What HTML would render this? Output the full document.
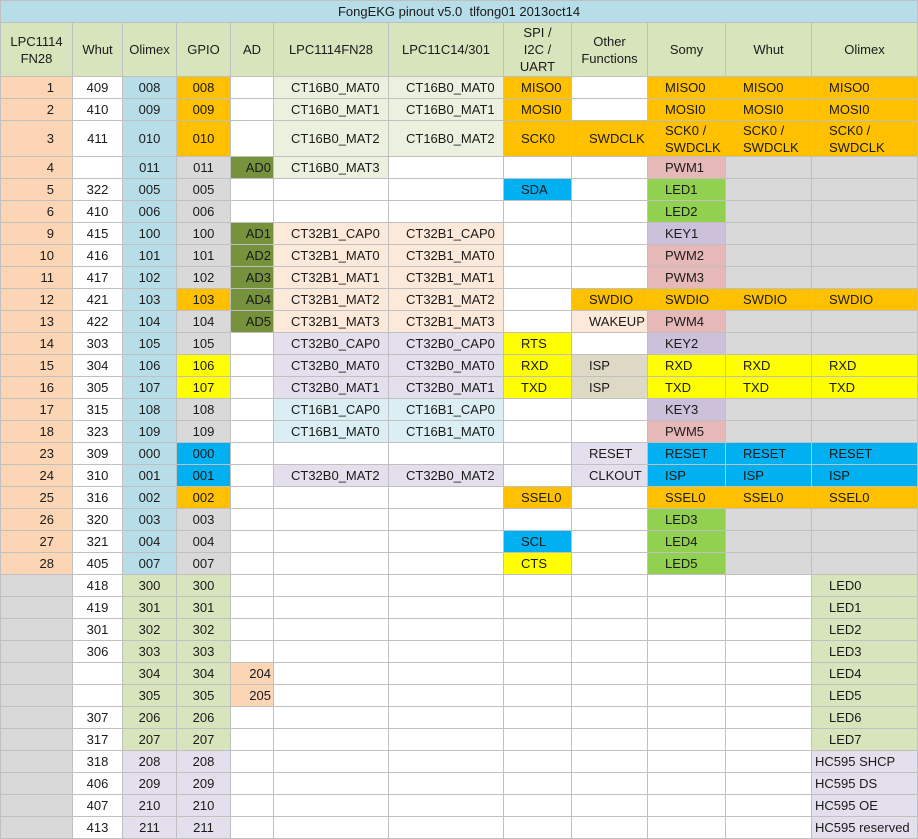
<!DOCTYPE html>
<html><head><meta charset="utf-8"><style>
*{margin:0;padding:0;box-sizing:border-box}
body{width:918px;height:839px;overflow:hidden;background:#fff;font-family:"Liberation Sans",Arial,sans-serif;font-size:13px;color:#1a1a1a}
.g{display:grid;background:#c0c0c0;padding:1px 0 1px 1px;gap:1px;width:918px;
grid-template-columns:71px 49px 53px 53px 42px 114px 114px 67px 75px 77px 85px 105px;
grid-template-rows:21px 53px 21px 21px 35px repeat(31,21px)}
.g>div{display:flex;align-items:center;background:#fff;white-space:nowrap;line-height:17px;overflow:hidden}
.t{grid-column:1/13;justify-content:center;background:#b7dee8!important}
.hd{background:#d8e4bc!important;justify-content:center;text-align:center}
.r{justify-content:flex-end;padding-right:18px}
.ra{justify-content:flex-end;padding-right:2px}
.c{justify-content:center}
.l{padding-left:17px}
.l3{padding-left:3px}
.p{background:#fcd5b4!important}.b{background:#b7dee8!important}.o{background:#ffc000!important}
.gy{background:#d9d9d9!important}.ol{background:#76923c!important}.lg{background:#ebf1de!important}
.pk{background:#e6b9b8!important}.gr{background:#92d050!important}.lv{background:#ccc0da!important}
.ll{background:#e4dfec!important}.pl{background:#fde9d9!important}.cy{background:#daeef3!important}
.tn{background:#ddd9c4!important}.bl{background:#00b0f0!important}.y{background:#ffff00!important}
.h{background:#d8e4bc!important}
</style></head><body><div class="g">
<div class="t">FongEKG pinout v5.0&nbsp; tlfong01 2013oct14</div>
<div class="hd">LPC1114<br>FN28</div><div class="hd">Whut</div><div class="hd">Olimex</div><div class="hd">GPIO</div><div class="hd">AD</div><div class="hd">LPC1114FN28</div><div class="hd">LPC11C14/301</div><div class="hd">SPI /<br>I2C /<br>UART</div><div class="hd">Other<br>Functions</div><div class="hd">Somy</div><div class="hd">Whut</div><div class="hd">Olimex</div>

<div class="p r">1</div><div class="c">409</div><div class="b c">008</div><div class="o c">008</div><div></div><div class="lg l">CT16B0_MAT0</div><div class="lg l">CT16B0_MAT0</div><div class="o l">MISO0</div><div></div><div class="o l">MISO0</div><div class="o l">MISO0</div><div class="o l">MISO0</div>
<div class="p r">2</div><div class="c">410</div><div class="b c">009</div><div class="o c">009</div><div></div><div class="lg l">CT16B0_MAT1</div><div class="lg l">CT16B0_MAT1</div><div class="o l">MOSI0</div><div></div><div class="o l">MOSI0</div><div class="o l">MOSI0</div><div class="o l">MOSI0</div>
<div class="p r">3</div><div class="c">411</div><div class="b c">010</div><div class="o c">010</div><div></div><div class="lg l">CT16B0_MAT2</div><div class="lg l">CT16B0_MAT2</div><div class="o l">SCK0</div><div class="o l">SWDCLK</div><div class="o l">SCK0 /<br>SWDCLK</div><div class="o l">SCK0 /<br>SWDCLK</div><div class="o l">SCK0 /<br>SWDCLK</div>
<div class="p r">4</div><div></div><div class="b c">011</div><div class="gy c">011</div><div class="ol ra">AD0</div><div class="lg l">CT16B0_MAT3</div><div></div><div></div><div></div><div class="pk l">PWM1</div><div class="gy"></div><div class="gy"></div>
<div class="p r">5</div><div class="c">322</div><div class="b c">005</div><div class="gy c">005</div><div></div><div></div><div></div><div class="bl l">SDA</div><div></div><div class="gr l">LED1</div><div class="gy"></div><div class="gy"></div>
<div class="p r">6</div><div class="c">410</div><div class="b c">006</div><div class="gy c">006</div><div></div><div></div><div></div><div></div><div></div><div class="gr l">LED2</div><div class="gy"></div><div class="gy"></div>
<div class="p r">9</div><div class="c">415</div><div class="b c">100</div><div class="gy c">100</div><div class="ol ra">AD1</div><div class="pl l">CT32B1_CAP0</div><div class="pl l">CT32B1_CAP0</div><div></div><div></div><div class="lv l">KEY1</div><div class="gy"></div><div class="gy"></div>
<div class="p r">10</div><div class="c">416</div><div class="b c">101</div><div class="gy c">101</div><div class="ol ra">AD2</div><div class="pl l">CT32B1_MAT0</div><div class="pl l">CT32B1_MAT0</div><div></div><div></div><div class="pk l">PWM2</div><div class="gy"></div><div class="gy"></div>
<div class="p r">11</div><div class="c">417</div><div class="b c">102</div><div class="gy c">102</div><div class="ol ra">AD3</div><div class="pl l">CT32B1_MAT1</div><div class="pl l">CT32B1_MAT1</div><div></div><div></div><div class="pk l">PWM3</div><div class="gy"></div><div class="gy"></div>
<div class="p r">12</div><div class="c">421</div><div class="b c">103</div><div class="o c">103</div><div class="ol ra">AD4</div><div class="pl l">CT32B1_MAT2</div><div class="pl l">CT32B1_MAT2</div><div></div><div class="o l">SWDIO</div><div class="o l">SWDIO</div><div class="o l">SWDIO</div><div class="o l">SWDIO</div>
<div class="p r">13</div><div class="c">422</div><div class="b c">104</div><div class="gy c">104</div><div class="ol ra">AD5</div><div class="pl l">CT32B1_MAT3</div><div class="pl l">CT32B1_MAT3</div><div></div><div class="pl l">WAKEUP</div><div class="pk l">PWM4</div><div class="gy"></div><div class="gy"></div>
<div class="p r">14</div><div class="c">303</div><div class="b c">105</div><div class="gy c">105</div><div></div><div class="ll l">CT32B0_CAP0</div><div class="ll l">CT32B0_CAP0</div><div class="y l">RTS</div><div></div><div class="lv l">KEY2</div><div class="gy"></div><div class="gy"></div>
<div class="p r">15</div><div class="c">304</div><div class="b c">106</div><div class="y c">106</div><div></div><div class="ll l">CT32B0_MAT0</div><div class="ll l">CT32B0_MAT0</div><div class="y l">RXD</div><div class="tn l">ISP</div><div class="y l">RXD</div><div class="y l">RXD</div><div class="y l">RXD</div>
<div class="p r">16</div><div class="c">305</div><div class="b c">107</div><div class="y c">107</div><div></div><div class="ll l">CT32B0_MAT1</div><div class="ll l">CT32B0_MAT1</div><div class="y l">TXD</div><div class="tn l">ISP</div><div class="y l">TXD</div><div class="y l">TXD</div><div class="y l">TXD</div>
<div class="p r">17</div><div class="c">315</div><div class="b c">108</div><div class="gy c">108</div><div></div><div class="cy l">CT16B1_CAP0</div><div class="cy l">CT16B1_CAP0</div><div></div><div></div><div class="lv l">KEY3</div><div class="gy"></div><div class="gy"></div>
<div class="p r">18</div><div class="c">323</div><div class="b c">109</div><div class="gy c">109</div><div></div><div class="cy l">CT16B1_MAT0</div><div class="cy l">CT16B1_MAT0</div><div></div><div></div><div class="pk l">PWM5</div><div class="gy"></div><div class="gy"></div>
<div class="p r">23</div><div class="c">309</div><div class="b c">000</div><div class="bl c">000</div><div></div><div></div><div></div><div></div><div class="ll l">RESET</div><div class="bl l">RESET</div><div class="bl l">RESET</div><div class="bl l">RESET</div>
<div class="p r">24</div><div class="c">310</div><div class="b c">001</div><div class="bl c">001</div><div></div><div class="ll l">CT32B0_MAT2</div><div class="ll l">CT32B0_MAT2</div><div></div><div class="ll l">CLKOUT</div><div class="bl l">ISP</div><div class="bl l">ISP</div><div class="bl l">ISP</div>
<div class="p r">25</div><div class="c">316</div><div class="b c">002</div><div class="o c">002</div><div></div><div></div><div></div><div class="o l">SSEL0</div><div></div><div class="o l">SSEL0</div><div class="o l">SSEL0</div><div class="o l">SSEL0</div>
<div class="p r">26</div><div class="c">320</div><div class="b c">003</div><div class="gy c">003</div><div></div><div></div><div></div><div></div><div></div><div class="gr l">LED3</div><div class="gy"></div><div class="gy"></div>
<div class="p r">27</div><div class="c">321</div><div class="b c">004</div><div class="gy c">004</div><div></div><div></div><div></div><div class="bl l">SCL</div><div></div><div class="gr l">LED4</div><div class="gy"></div><div class="gy"></div>
<div class="p r">28</div><div class="c">405</div><div class="b c">007</div><div class="gy c">007</div><div></div><div></div><div></div><div class="y l">CTS</div><div></div><div class="gr l">LED5</div><div class="gy"></div><div class="gy"></div>

<div class="gy"></div><div class="c">418</div><div class="h c">300</div><div class="h c">300</div><div></div><div></div><div></div><div></div><div></div><div></div><div></div><div class="h l">LED0</div>
<div class="gy"></div><div class="c">419</div><div class="h c">301</div><div class="h c">301</div><div></div><div></div><div></div><div></div><div></div><div></div><div></div><div class="h l">LED1</div>
<div class="gy"></div><div class="c">301</div><div class="h c">302</div><div class="h c">302</div><div></div><div></div><div></div><div></div><div></div><div></div><div></div><div class="h l">LED2</div>
<div class="gy"></div><div class="c">306</div><div class="h c">303</div><div class="h c">303</div><div></div><div></div><div></div><div></div><div></div><div></div><div></div><div class="h l">LED3</div>
<div class="gy"></div><div></div><div class="h c">304</div><div class="h c">304</div><div class="p ra">204</div><div></div><div></div><div></div><div></div><div></div><div></div><div class="h l">LED4</div>
<div class="gy"></div><div></div><div class="h c">305</div><div class="h c">305</div><div class="p ra">205</div><div></div><div></div><div></div><div></div><div></div><div></div><div class="h l">LED5</div>
<div class="gy"></div><div class="c">307</div><div class="h c">206</div><div class="h c">206</div><div></div><div></div><div></div><div></div><div></div><div></div><div></div><div class="h l">LED6</div>
<div class="gy"></div><div class="c">317</div><div class="h c">207</div><div class="h c">207</div><div></div><div></div><div></div><div></div><div></div><div></div><div></div><div class="h l">LED7</div>
<div class="gy"></div><div class="c">318</div><div class="ll c">208</div><div class="ll c">208</div><div></div><div></div><div></div><div></div><div></div><div></div><div></div><div class="ll l3">HC595 SHCP</div>
<div class="gy"></div><div class="c">406</div><div class="ll c">209</div><div class="ll c">209</div><div></div><div></div><div></div><div></div><div></div><div></div><div></div><div class="ll l3">HC595 DS</div>
<div class="gy"></div><div class="c">407</div><div class="ll c">210</div><div class="ll c">210</div><div></div><div></div><div></div><div></div><div></div><div></div><div></div><div class="ll l3">HC595 OE</div>
<div class="gy"></div><div class="c">413</div><div class="ll c">211</div><div class="ll c">211</div><div></div><div></div><div></div><div></div><div></div><div></div><div></div><div class="ll l3">HC595 reserved</div>
</div></body></html>
